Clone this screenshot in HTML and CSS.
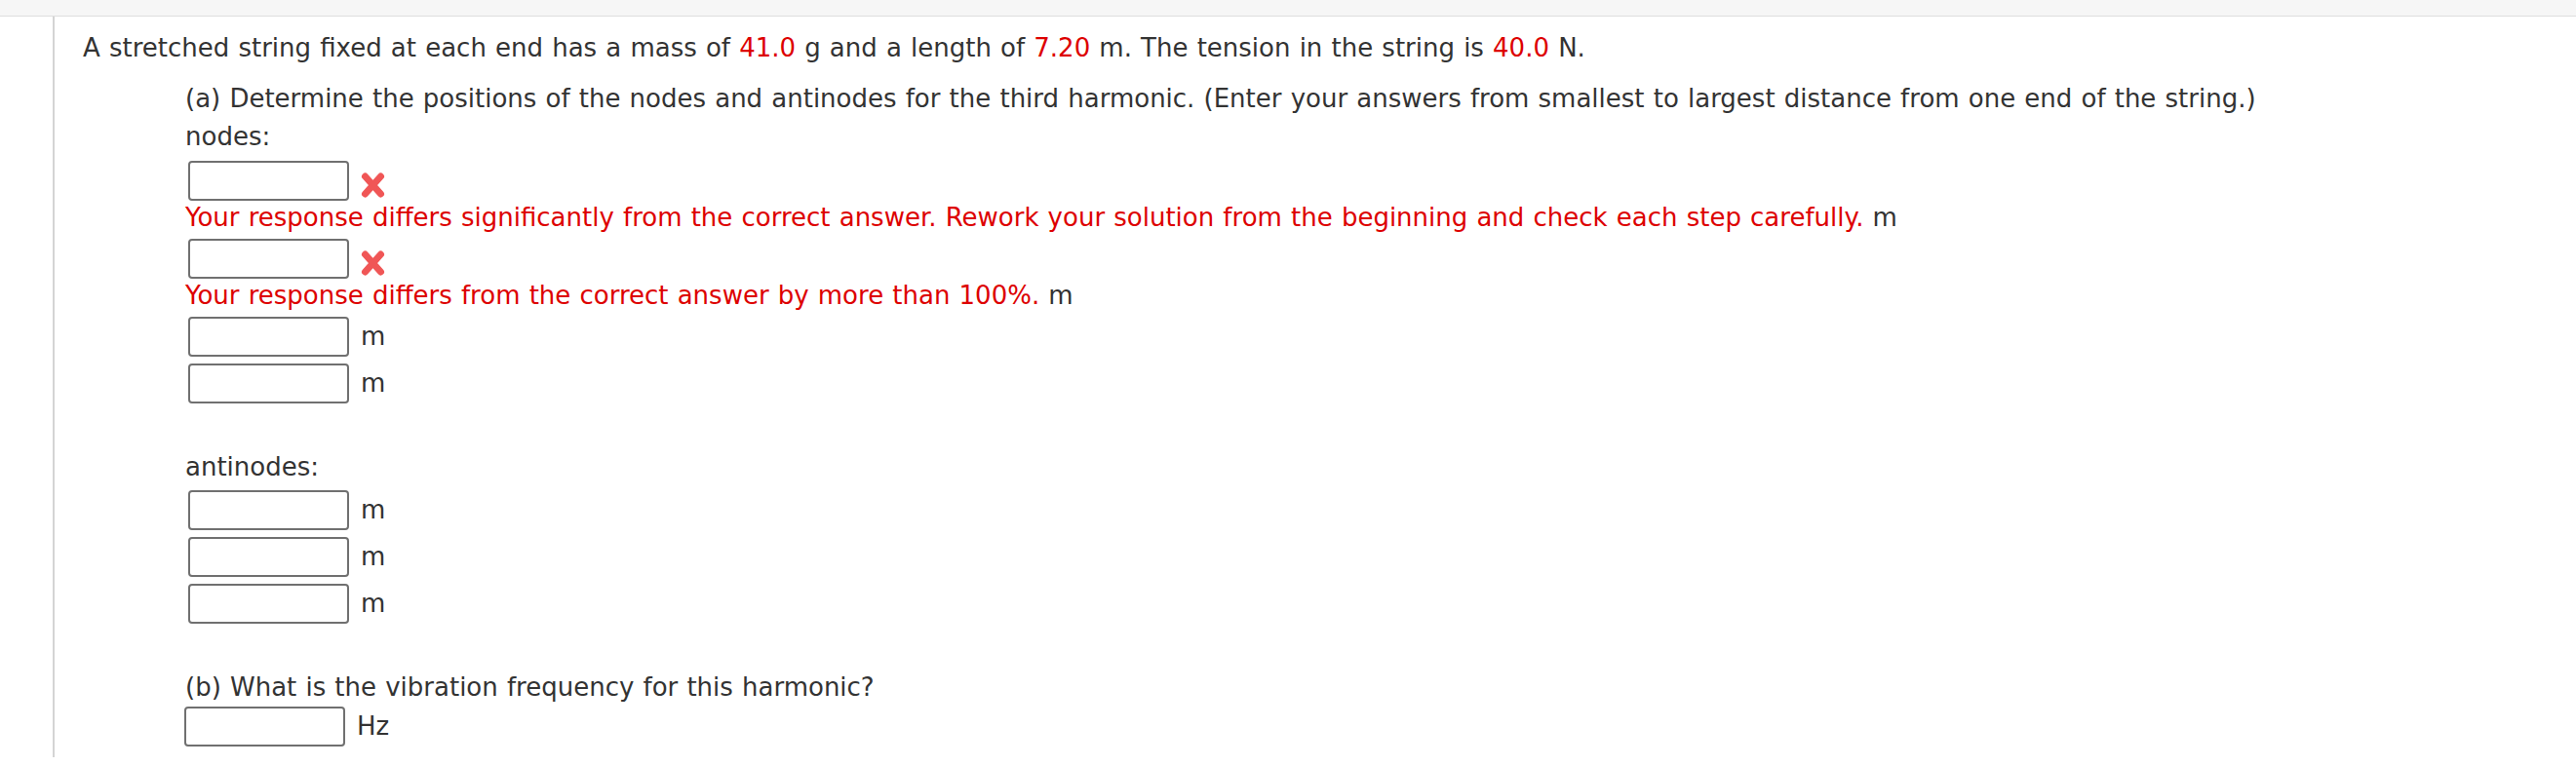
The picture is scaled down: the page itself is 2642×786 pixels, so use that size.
FILE: index.html
```html
<!DOCTYPE html>
<html lang="en">
<head>
<meta charset="utf-8">
<title>Standing waves question</title>
<link rel="stylesheet" href="styles.css">
</head>
<body>
<div class="topbar"></div>
<div class="page">
  <p class="intro">A stretched string fixed at each end has a mass of <span class="val">41.0</span> g and a length of <span class="val">7.20</span> m. The tension in the string is <span class="val">40.0</span> N.</p>
  <div class="part">
    <p class="prompt">(a) Determine the positions of the nodes and antinodes for the third harmonic. (Enter your answers from smallest to largest distance from one end of the string.)</p>
    <p class="label">nodes:</p>
    <div class="row first">
      <input class="field" type="text" aria-label="node 1">
      <svg class="wrong" viewBox="0 0 26 28" aria-hidden="true"><path d="M5 5 L21 23 M21 5 L5 23" /></svg>
    </div>
    <p class="error">Your response differs significantly from the correct answer. Rework your solution from the beginning and check each step carefully. <span class="unit-inline">m</span></p>
    <div class="row after-error">
      <input class="field" type="text" aria-label="node 2">
      <svg class="wrong" viewBox="0 0 26 28" aria-hidden="true"><path d="M5 5 L21 23 M21 5 L5 23" /></svg>
    </div>
    <p class="error">Your response differs from the correct answer by more than 100%. <span class="unit-inline">m</span></p>
    <div class="row after-error">
      <input class="field" type="text" aria-label="node 3">
      <span class="unit">m</span>
    </div>
    <div class="row">
      <input class="field" type="text" aria-label="node 4">
      <span class="unit">m</span>
    </div>

    <p class="label section">antinodes:</p>
    <div class="row first-a">
      <input class="field" type="text" aria-label="antinode 1">
      <span class="unit">m</span>
    </div>
    <div class="row">
      <input class="field" type="text" aria-label="antinode 2">
      <span class="unit">m</span>
    </div>
    <div class="row">
      <input class="field" type="text" aria-label="antinode 3">
      <span class="unit">m</span>
    </div>

    <p class="label section">(b) What is the vibration frequency for this harmonic?</p>
    <div class="row hz">
      <input class="field" type="text" aria-label="frequency">
      <span class="unit">Hz</span>
    </div>
  </div>
</div>
</body>
</html>
```

FILE: styles.css
```css
html, body {
  margin: 0;
  padding: 0;
  background: #ffffff;
}

body {
  font-family: "DejaVu Sans", Verdana, sans-serif;
  font-size: 26px;
  line-height: 39px;
  color: #333333;
  word-spacing: 0.9px;
}

p {
  margin: 0;
}

.topbar {
  height: 16px;
  background: #f6f6f6;
  border-bottom: 1px solid #dedede;
}

.page {
  margin-left: 54px;
  border-left: 2px solid #d4d4d4;
  padding: 13px 0 0 29px;
  min-height: 760px;
  box-sizing: border-box;
}

.val {
  color: #dd0000;
}

.part {
  padding-left: 105px;
  margin-top: 13px;
}

.row {
  display: flex;
  align-items: center;
  margin-top: 7px;
  margin-left: 3px;
  height: 41px;
}

.row.first {
  margin-top: 5px;
}

.row.after-error,
.row.first-a {
  margin-top: 4px;
}

.row.hz {
  margin-top: 0;
  margin-left: -1px;
}

.field {
  box-sizing: border-box;
  width: 165px;
  height: 41px;
  margin: 0;
  padding: 0 6px;
  border: 2px solid #707070;
  border-radius: 4px;
  background: #ffffff;
  font: inherit;
}

.wrong {
  width: 27px;
  height: 28px;
  margin-left: 11px;
  align-self: flex-end;
  margin-bottom: 2px;
}

.wrong path {
  fill: none;
  stroke: #f05656;
  stroke-width: 7;
  stroke-linecap: round;
}

.unit {
  margin-left: 12px;
}

.error {
  color: #dd0000;
  line-height: 35px;
}

.unit-inline {
  color: #333333;
}

.label.section {
  margin-top: 46px;
}
```
